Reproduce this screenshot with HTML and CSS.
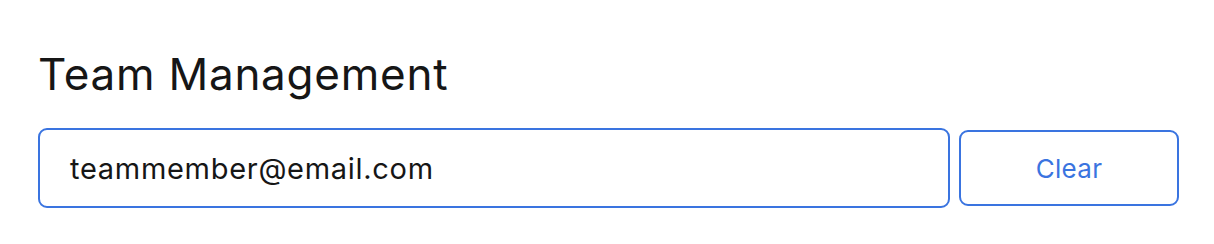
FILE: index.html
```html
<!DOCTYPE html>
<html>
<head>
<meta charset="utf-8">
<link rel="stylesheet" href="styles.css">
</head>
<body>
<div class="page">
  <h1 class="title">Team Management</h1>
  <div class="row">
    <div class="field">teammember@email.com</div>
    <button class="clear">Clear</button>
  </div>
</div>
</body>
</html>
```
FILE: styles.css
```css
html, body {
  margin: 0;
  padding: 0;
  background: #ffffff;
}
.page {
  padding: 48px 0 0 38px;
  font-family: Inter, "Liberation Sans", sans-serif;
}
.title {
  margin: 0;
  font-size: 44px;
  font-weight: 400;
  line-height: 52px;
  color: #161616;
  letter-spacing: 0.75px;
}
.row {
  display: flex;
  align-items: center;
  gap: 9px;
  margin-top: 28px;
}
.field {
  box-sizing: border-box;
  width: 912px;
  height: 80px;
  border: 2px solid #3a74e0;
  border-radius: 9px;
  padding: 0 0 0 30px;
  display: flex;
  align-items: center;
  font-size: 29px;
  letter-spacing: 0.7px;
  color: #161616;
}
.clear {
  box-sizing: border-box;
  width: 220px;
  height: 76px;
  border: 2px solid #3a74e0;
  border-radius: 9px;
  background: #ffffff;
  color: #3a74e0;
  font-family: Inter, "Liberation Sans", sans-serif;
  font-size: 26px;
  letter-spacing: 0.3px;
  padding: 0;
}
```
